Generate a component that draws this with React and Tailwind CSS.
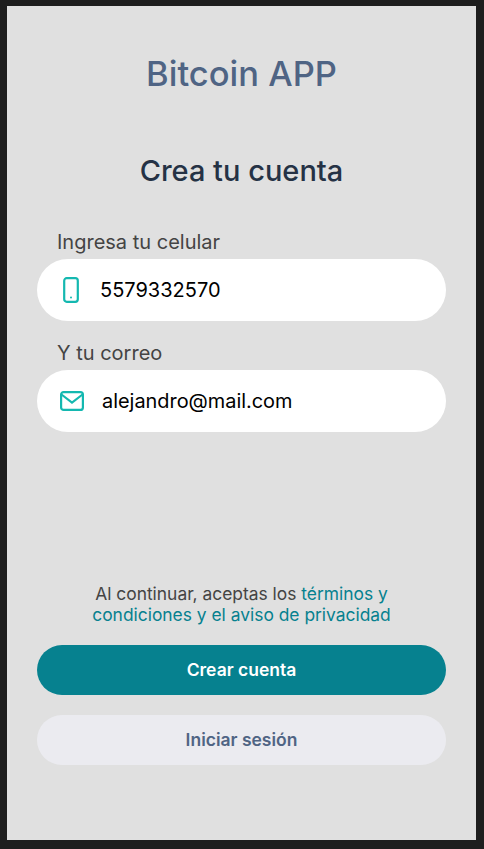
const PhoneIcon = () => (
  <svg width="16" height="26" viewBox="0 0 16 26" fill="none" className="text-[#14b8b0]">
    <rect x="1.2" y="1.2" width="13.6" height="23.6" rx="2.5" stroke="currentColor" strokeWidth="2.2" />
    <circle cx="8" cy="20.5" r="1" fill="currentColor" />
  </svg>
);

const MailIcon = () => (
  <svg width="24" height="20" viewBox="0 0 24 20" fill="none" className="text-[#14b8b0]">
    <rect x="1.1" y="1.1" width="21.8" height="17.8" rx="2.5" stroke="currentColor" strokeWidth="2.2" />
    <path d="M1.5 3.5 12 11.5 22.5 3.5" stroke="currentColor" strokeWidth="2.2" />
  </svg>
);

const Field = ({ label, value, icon, iconBox, valueClass }) => (
  <div>
    <p className="pl-[20px] text-[20px] leading-[24px] text-[#444444]">{label}</p>
    <div className="mt-[5px] flex h-[62px] items-center rounded-full bg-white pl-[23px] text-black">
      <div className={`flex items-center ${iconBox}`}>{icon}</div>
      <span className={valueClass}>{value}</span>
    </div>
  </div>
);

export default function App() {
  return (
    <div className="h-[849px] w-[484px] bg-[#1e1e1e] pb-[9px] pl-[7px] pr-[8px] pt-[6px] font-['Inter',sans-serif]">
      <div className="flex h-[834px] flex-col bg-[#e0e0e0] px-[30px]">
        <h1 className="mt-[46px] text-center text-[34.5px] font-medium leading-[44px] text-[#4f6484]">Bitcoin APP</h1>
        <h2 className="mt-[57px] text-center text-[29px] font-medium leading-[36px] text-[#253245]">Crea tu cuenta</h2>

        <div className="mt-[41px] flex flex-col gap-[20px]">
          <Field label="Ingresa tu celular" value="5579332570" icon={<PhoneIcon />} iconBox="w-[40px] pl-[3px]" valueClass="text-[20px]" />
          <Field label="Y tu correo" value="alejandro@mail.com" icon={<MailIcon />} iconBox="w-[42px]" valueClass="pt-[2px] text-[19.9px]" />
        </div>

        <p className="mt-[151px] text-center text-[17.4px] leading-[21px] text-[#444444]">
          Al continuar, aceptas los <span className="text-[#06818f]">términos y</span>
          <br />
          <span className="text-[#06818f]">condiciones y el aviso de privacidad</span>
        </p>

        <button className="mt-[20px] h-[50px] w-full rounded-full bg-[#06818f] text-[17.5px] font-semibold text-white">Crear cuenta</button>
        <button className="mt-[20px] h-[50px] w-full rounded-full bg-[#ebebf0] text-[17.5px] font-semibold text-[#4f6484]">Iniciar sesión</button>
      </div>
    </div>
  );
}
